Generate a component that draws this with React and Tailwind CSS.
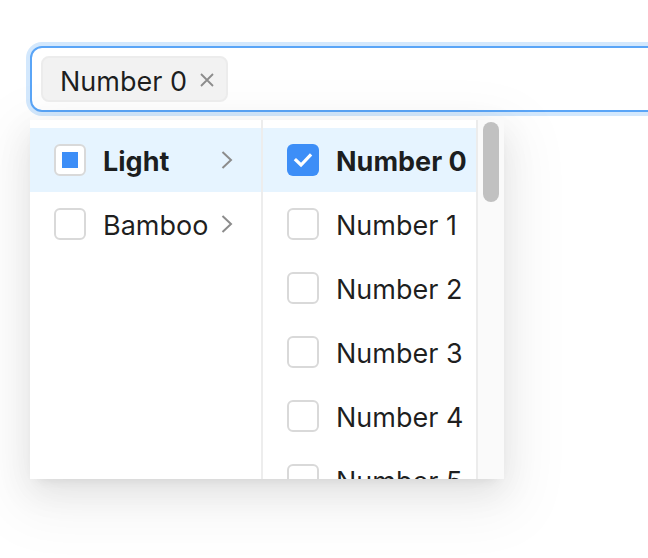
import React from "react";

function Checkbox({ state }) {
  if (state === "checked") {
    return (
      <div className="w-[32px] h-[32px] shrink-0 rounded-[6px] bg-[#3d8ef7] flex items-center justify-center">
        <svg width="20" height="16" viewBox="0 0 20 16" fill="none">
          <path d="M3 8.2 L8 13 L17 3.5" stroke="white" strokeWidth="3.2" strokeLinecap="square" strokeLinejoin="miter" />
        </svg>
      </div>
    );
  }
  return (
    <div className="w-[32px] h-[32px] shrink-0 rounded-[6px] border-2 border-[#d9d9d9] bg-white flex items-center justify-center">
      {state === "indeterminate" && <div className="w-[16px] h-[16px] bg-[#3d8ef7]" />}
    </div>
  );
}

function Chevron() {
  return (
    <svg width="12" height="20" viewBox="0 0 12 20" fill="none" className="ml-auto shrink-0">
      <path d="M1.5 2 L10 10 L1.5 18" stroke="#8c8c8c" strokeWidth="2" />
    </svg>
  );
}

export default function App() {
  const numbers = [0, 1, 2, 3, 4, 5];
  return (
    <div className="w-[648px] h-[558px] overflow-hidden bg-white pl-[30px] pt-[46px] font-['Inter','Liberation_Sans',sans-serif] text-[rgba(0,0,0,0.88)]">
      <div className="w-[700px] h-[66px] rounded-[12px] border-2 border-[#5aa5f7] ring-4 ring-[#d3e8fd] bg-white flex items-center pl-[9px]">
        <div className="h-[46px] flex items-center gap-[12px] pl-[17px] pr-[11px] rounded-[8px] border-2 border-[#ececec] bg-[#f2f2f2] text-[27px] leading-none">
          <span className="pt-[4px]">Number 0</span>
          <svg width="16" height="16" viewBox="0 0 16 16" fill="none" className="mt-[2px]">
            <path d="M2 2 L14 14 M14 2 L2 14" stroke="#8c8c8c" strokeWidth="1.8" />
          </svg>
        </div>
      </div>
      <div className="mt-[8px] w-[474px] h-[359px] bg-white flex shadow-[0_12px_32px_0_rgba(0,0,0,0.08),0_6px_12px_-8px_rgba(0,0,0,0.12),0_18px_56px_16px_rgba(0,0,0,0.05)] overflow-hidden">
        <div className="w-[233px] shrink-0 border-r-2 border-[#ededed] pt-[8px] text-[27px]">
          <div className="h-[64px] flex items-center pl-[24px] pr-[28px] bg-[#e6f4ff]">
            <Checkbox state="indeterminate" />
            <span className="ml-[17px] pt-[4px] font-bold">Light</span>
            <Chevron />
          </div>
          <div className="h-[64px] flex items-center pl-[24px] pr-[28px]">
            <Checkbox state="empty" />
            <span className="ml-[17px] pt-[4px]">Bamboo</span>
            <Chevron />
          </div>
        </div>
        <div className="flex-1 flex">
          <div className="flex-1 pt-[8px] text-[27px] overflow-hidden">
            {numbers.map((n) => (
              <div key={n} className={"h-[64px] flex items-center pl-[24px] " + (n === 0 ? "bg-[#e6f4ff]" : "")}>
                <Checkbox state={n === 0 ? "checked" : "empty"} />
                <span className={"ml-[17px] pt-[4px] whitespace-nowrap " + (n === 0 ? "font-bold" : "")}>Number {n}</span>
              </div>
            ))}
          </div>
          <div className="w-[28px] shrink-0 border-l-2 border-[#ececec] bg-[#fafafa] pl-[5px] pt-[2px]">
            <div className="w-[16px] h-[80px] rounded-full bg-[#c1c1c1]" />
          </div>
        </div>
      </div>
    </div>
  );
}
